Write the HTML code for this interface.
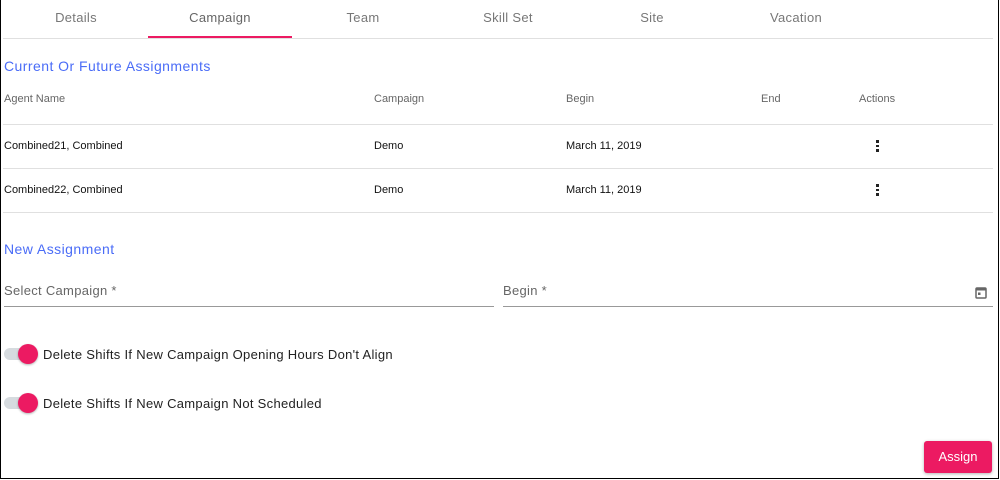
<!DOCTYPE html>
<html><head><style>
*{margin:0;padding:0;box-sizing:border-box}
body{width:1000px;height:480px;background:#fff;font-family:"Liberation Sans",sans-serif;position:relative;overflow:hidden}
.frame{position:absolute;left:0;top:0;width:999px;height:479px;border:1px solid #000;border-top:none}
.a{position:absolute;white-space:nowrap}
.tab{position:absolute;top:10px;width:144px;text-align:center;font-size:13px;color:#777;letter-spacing:0.3px}
.hl{position:absolute;left:3px;width:990px;height:1px;background:#e0e0e0}
.th{font-size:11px;color:#666}
.td{font-size:11px;color:#111}
.dots{position:absolute;width:3px}
.dots i{display:block;width:2.5px;height:2.5px;background:#222;margin-bottom:2px}
.tg{position:absolute;left:4px;width:30px;height:12px;border-radius:6px;background:#d6dbdf}
.tg b{position:absolute;left:14px;top:-4px;width:20px;height:20px;border-radius:50%;background:#ec1a62;box-shadow:0 1px 2px rgba(0,0,0,.3)}
.lbl{font-size:13px;color:#222;letter-spacing:0.3px}
.blue{font-size:14px;color:#4a6cf7;letter-spacing:0.45px}
</style></head><body>
<div class="frame"></div>
<div class="tab" style="left:4px">Details</div>
<div class="tab" style="left:148px;color:#666">Campaign</div>
<div class="tab" style="left:291px">Team</div>
<div class="tab" style="left:436px">Skill Set</div>
<div class="tab" style="left:580px">Site</div>
<div class="tab" style="left:724px">Vacation</div>
<div class="hl" style="top:38px"></div>
<div class="a" style="left:148px;top:36px;width:144px;height:2px;background:#ec1a62"></div>
<div class="a blue" style="left:4px;top:58px">Current Or Future Assignments</div>
<div class="a th" style="left:4px;top:93px">Agent Name</div>
<div class="a th" style="left:374px;top:93px">Campaign</div>
<div class="a th" style="left:566px;top:93px">Begin</div>
<div class="a th" style="left:761px;top:93px">End</div>
<div class="a th" style="left:859px;top:93px">Actions</div>
<div class="hl" style="top:124px"></div>
<div class="a td" style="left:4px;top:140px">Combined21, Combined</div>
<div class="a td" style="left:374px;top:140px">Demo</div>
<div class="a td" style="left:566px;top:140px">March 11, 2019</div>
<div class="dots" style="left:876px;top:140px"><i></i><i></i><i></i></div>
<div class="hl" style="top:168px"></div>
<div class="a td" style="left:4px;top:184px">Combined22, Combined</div>
<div class="a td" style="left:374px;top:184px">Demo</div>
<div class="a td" style="left:566px;top:184px">March 11, 2019</div>
<div class="dots" style="left:876px;top:184px"><i></i><i></i><i></i></div>
<div class="hl" style="top:212px"></div>
<div class="a blue" style="left:4px;top:241px">New Assignment</div>
<div class="a" style="left:4px;top:283px;font-size:13px;color:#666;letter-spacing:0.3px">Select Campaign *</div>
<div class="a" style="left:4px;top:306px;width:490px;height:1px;background:#999"></div>
<div class="a" style="left:503px;top:283px;font-size:13px;color:#666;letter-spacing:0.3px">Begin *</div>
<div class="a" style="left:503px;top:306px;width:490px;height:1px;background:#999"></div>
<svg class="a" style="left:975px;top:286px" width="12" height="13" viewBox="0 0 12 13"><rect x="1" y="2" width="10" height="10" rx="1" fill="none" stroke="#666" stroke-width="1.5"/><rect x="1" y="2" width="10" height="2.5" fill="#666"/><rect x="3" y="6.5" width="2.5" height="2.5" fill="#666"/></svg>
<div class="tg" style="top:348px"><b></b></div>
<div class="a lbl" style="left:43px;top:347px">Delete Shifts If New Campaign Opening Hours Don't Align</div>
<div class="tg" style="top:397px"><b></b></div>
<div class="a lbl" style="left:43px;top:396px">Delete Shifts If New Campaign Not Scheduled</div>
<div class="a" style="left:924px;top:441px;width:68px;height:32px;background:#ec1a62;border-radius:3px;color:#fff;font-size:13px;text-align:center;line-height:32px;box-shadow:0 1px 3px rgba(0,0,0,.3)">Assign</div>
</body></html>
